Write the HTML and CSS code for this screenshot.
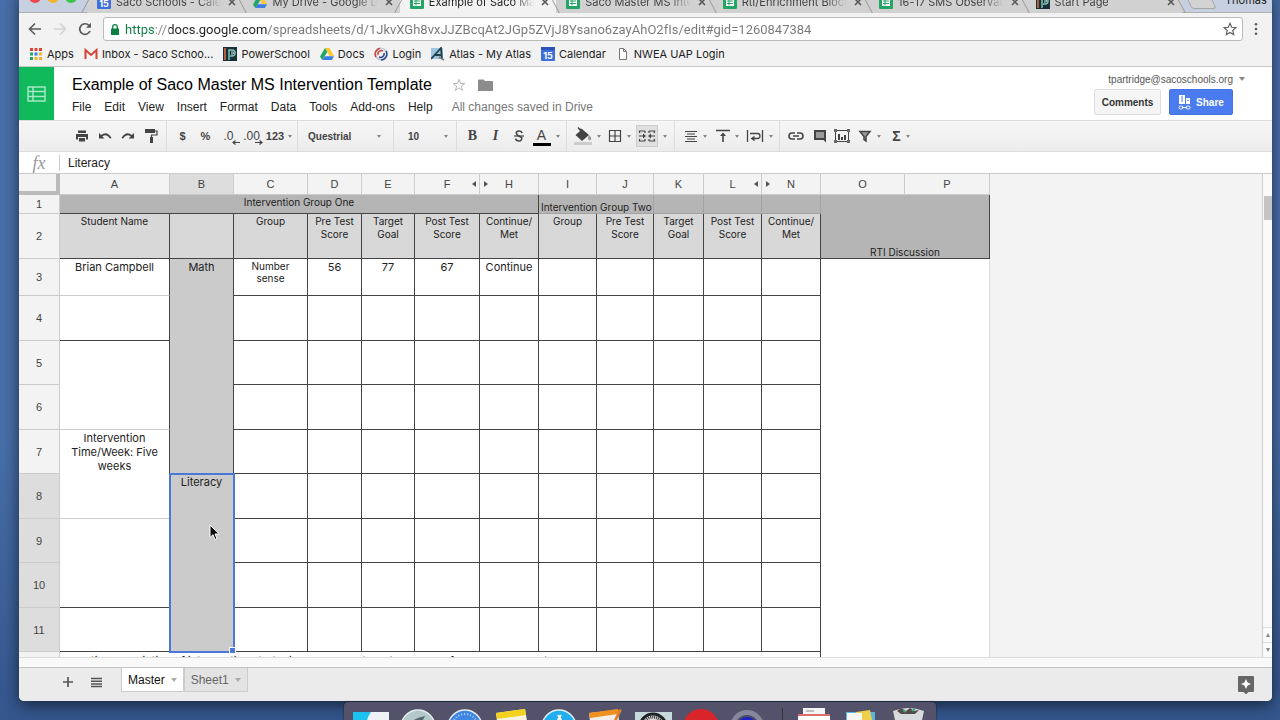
FILE: index.html
```html
<!DOCTYPE html>
<html lang="en">
<head>
    <meta charset="UTF-8">
    <meta name="viewport" content="width=device-width, initial-scale=1.0">
    <title>Example of Saco Master MS Intervention Template</title>
    <link rel="stylesheet" href="styles.css">
</head>
<body>
    <!-- shared icons -->
    <svg class="defs" width="0" height="0" aria-hidden="true">
        <symbol id="i-sheet" viewBox="0 0 14 14">
            <rect width="14" height="14" rx="1" fill="#23a566"/>
            <path d="M3 4h8v7H3z" fill="#fff"/>
            <path d="M4 6h6M4 8.500h6M6 4.500v6" stroke="#23a566" stroke-width="1"/>
        </symbol>
        <symbol id="i-cal" viewBox="0 0 14 14">
            <rect width="14" height="14" rx="1" fill="#3f6fdc"/>
            <rect width="14" height="3" fill="#2a53b5"/>
            <text x="7" y="11.500" font-size="9" font-weight="bold" text-anchor="middle" fill="#fff">15</text>
        </symbol>
        <symbol id="i-drive" viewBox="0 0 14 14">
            <path d="M5 1h4.500l4.500 8H9.500z" fill="#fcc934"/>
            <path d="M5 1L0 9.500 2.300 13l5-8z" fill="#22a565"/>
            <path d="M4.700 9.200H14L11.800 13H2.300z" fill="#3d7de4"/>
        </symbol>
        <symbol id="i-ps" viewBox="0 0 14 14">
            <rect width="14" height="14" fill="#17303a"/>
            <path d="M1 1h2v12H1z" fill="#b0603a"/>
            <path d="M6 13V3h3a3 3 0 0 1 0 6H7" fill="none" stroke="#7fc3b4" stroke-width="1.500"/>
            <path d="M8 5h1.500a1 1 0 0 1 0 2H8" fill="none" stroke="#d8e8e0"/>
        </symbol>
        <symbol id="i-close" viewBox="0 0 8 8">
            <path d="M1 1l6 6M7 1L1 7" stroke="#555" stroke-width="1.500"/>
        </symbol>
    </svg>

    <div class="window">
        <div class="tab-strip">
            <div class="lights"><i class="red"></i><i class="yellow"></i><i class="green"></i></div>
            <div class="tabs">
                <div class="tab"><svg><use href="#i-cal"/></svg><span>Saco Schools - Calendar</span><button aria-label="Close tab"><svg><use href="#i-close"/></svg></button></div>
                <div class="tab"><svg><use href="#i-drive"/></svg><span>My Drive - Google Drive</span><button aria-label="Close tab"><svg><use href="#i-close"/></svg></button></div>
                <div class="tab active"><svg><use href="#i-sheet"/></svg><span>Example of Saco Master</span><button aria-label="Close tab"><svg><use href="#i-close"/></svg></button></div>
                <div class="tab"><svg><use href="#i-sheet"/></svg><span>Saco Master MS Intervention</span><button aria-label="Close tab"><svg><use href="#i-close"/></svg></button></div>
                <div class="tab"><svg><use href="#i-sheet"/></svg><span>RtI/Enrichment Block</span><button aria-label="Close tab"><svg><use href="#i-close"/></svg></button></div>
                <div class="tab"><svg><use href="#i-sheet"/></svg><span>16-17 SMS Observations</span><button aria-label="Close tab"><svg><use href="#i-close"/></svg></button></div>
                <div class="tab"><svg><use href="#i-ps"/></svg><span>Start Page</span><button aria-label="Close tab"><svg><use href="#i-close"/></svg></button></div>
            </div>
            <button class="new-tab" aria-label="New tab"></button>
            <span class="profile">Thomas</span>
        </div>

        <div class="nav-bar">
            <button aria-label="Back"><svg width="14" height="14" viewBox="0 0 14 14"><path d="M13 7H2M7 1.500L1.500 7 7 12.500" fill="none" stroke="#5a5a5a" stroke-width="1.600"/></svg></button>
            <button aria-label="Forward"><svg width="14" height="14" viewBox="0 0 14 14"><path d="M1 7h11M7 1.500L12.500 7 7 12.500" fill="none" stroke="#d2d2d2" stroke-width="1.600"/></svg></button>
            <button aria-label="Reload"><svg width="14" height="14" viewBox="0 0 14 14"><path d="M12 9a5.300 5.300 0 1 1-1-5.500" fill="none" stroke="#5a5a5a" stroke-width="1.700"/><path d="M13 .8v5H8z" fill="#5a5a5a"/></svg></button>
            <div class="address">
                <svg width="8" height="11" viewBox="0 0 8 11"><path d="M0 4.500h8V11H0z" fill="#0b8043"/><path d="M1.700 5V3a2.300 2.300 0 0 1 4.600 0v2" fill="none" stroke="#0b8043" stroke-width="1.300"/></svg>
                <input class="url" type="text" aria-label="Address" value="https://docs.google.com/spreadsheets/d/1JkvXGh8vxJJZBcqAt2JGp5ZVjJ8Ysano6zayAhO2fIs/edit#gid=1260847384">
                <svg width="14" height="14" viewBox="0 0 14 14"><path d="M7 1.300l1.700 4 4.200.4-3.200 2.800 1 4.200L7 10.500l-3.700 2.200 1-4.200L1.100 5.700l4.200-.4z" fill="none" stroke="#5a5a5a" stroke-width="1.100"/></svg>
            </div>
            <button aria-label="Menu"><svg width="4" height="14" viewBox="0 0 4 14" fill="#5a5a5a"><circle cx="2" cy="2.200" r="1.300"/><circle cx="2" cy="7" r="1.300"/><circle cx="2" cy="11.800" r="1.300"/></svg></button>
        </div>

        <nav class="bookmarks">
            <a href="#"><svg viewBox="0 0 14 14"><g fill="#d9453b"><path d="M1 1h3v3H1zM5.500 1h3v3h-3z"/><path d="M10 1h3v3h-3z"/></g><path d="M1 5.500h3v3H1z" fill="#22a565"/><path d="M5.500 5.500h3v3h-3z" fill="#3d7de4"/><path d="M10 5.500h3v3h-3z" fill="#f0b428"/><path d="M1 10h3v3H1z" fill="#22a565"/><path d="M5.500 10h3v3h-3zM10 10h3v3h-3z" fill="#f0b428"/></svg>Apps</a>
            <a href="#"><svg viewBox="0 0 14 14"><path d="M1 2.500h12v9H1z" fill="#f3f3f3"/><path d="M1.500 12V3l5.500 5 5.500-5v9" fill="none" stroke="#d5443a" stroke-width="2"/></svg>Inbox - Saco Schoo...</a>
            <a href="#"><svg><use href="#i-ps"/></svg>PowerSchool</a>
            <a href="#"><svg><use href="#i-drive"/></svg>Docs</a>
            <a href="#"><svg viewBox="0 0 14 14" fill="none" stroke-width="1.600"><circle cx="7" cy="7" r="5.800" stroke="#c9ccd6"/><path d="M2 10A6 6 0 0 1 6 1.200M4 8a3.500 3.500 0 0 1 5-4" stroke="#c8453f"/><path d="M12 4A6 6 0 0 1 7 13M10 6a3.500 3.500 0 0 1-5 4" stroke="#2f4d8f"/></svg>Login</a>
            <a href="#"><svg viewBox="0 0 14 14"><path d="M0 1h12v11H0z" fill="#9cc4dc"/><path d="M0 12L10 1l1 11M4 8h7" fill="none" stroke="#24404f" stroke-width="1.800"/><path d="M8 10l5 3" stroke="#777" stroke-width="1.500"/></svg>Atlas - My Atlas</a>
            <a href="#"><svg><use href="#i-cal"/></svg>Calendar</a>
            <a href="#"><svg viewBox="0 0 14 14"><path d="M3.500 1.500h4l3 3v8h-7zM7.500 1.500v3h3" fill="#fff" stroke="#777"/></svg>NWEA UAP Login</a>
        </nav>

        <header class="doc-header">
            <a class="doc-logo" href="#" aria-label="Sheets home"><svg width="19" height="16" viewBox="0 0 19 16"><path d="M1 1h17v14H1zM1 5.500h17M1 10.500h17M6 1v14" fill="none" stroke="#a5e8c2" stroke-width="1.500"/></svg></a>
            <div class="doc-main">
                <div class="doc-title">
                    <h1>Example of Saco Master MS Intervention Template</h1>
                    <button aria-label="Star"><svg width="14" height="14" viewBox="0 0 14 14"><path d="M7 1.300l1.500 4.200h4.400L9.400 8.100l1.200 4.300L7 9.900l-3.600 2.500 1.200-4.300L1.100 5.500h4.400z" fill="none" stroke="#b5b5b5"/></svg></button>
                    <button aria-label="Move to folder"><svg width="15" height="13" viewBox="0 0 15 13"><path d="M0 1.500Q0 .5 1 .5h4.500L7 2h7q1 0 1 1v9H0z" fill="#8c8c8c"/></svg></button>
                </div>
                <div class="menus">
                    <button>File</button>
                    <button>Edit</button>
                    <button>View</button>
                    <button>Insert</button>
                    <button>Format</button>
                    <button>Data</button>
                    <button>Tools</button>
                    <button>Add-ons</button>
                    <button>Help</button>
                    <span class="saved">All changes saved in Drive</span>
                </div>
            </div>
            <div class="doc-side">
                <button class="account">tpartridge@sacoschools.org <i class="caret"></i></button>
                <div class="doc-buttons">
                    <button class="btn">Comments</button>
                    <button class="btn share"><svg width="13" height="15" viewBox="0 0 13 15"><path d="M1 0h6v3h5v6H1z" fill="#fff"/><path d="M3 2h2M3 4h2M3 6h2M9 5.500h1.500M7.500 3v6" stroke="#4a7cf0"/><rect x="1" y="11" width="4" height="3" rx="1.500" fill="none" stroke="#fff"/><rect x="8" y="11" width="4" height="3" rx="1.500" fill="none" stroke="#fff"/><path d="M4 12.500h5" stroke="#fff"/></svg>Share</button>
                </div>
            </div>
        </header>

        <div class="toolbar">
            <div class="group first">
                <button aria-label="Print"><svg viewBox="0 0 14 14"><path d="M3 1.500h8V4H3zM1 5h12v5.500h-2V8H3v2.500H1zM4 9h6v3.500H4z" fill="#444"/></svg></button>
                <button aria-label="Undo"><svg viewBox="0 0 14 14"><path d="M1 4v5.500h5.500L4.300 7.400Q8.500 4.500 12 9.600l1.500-.7Q9 1.500 3.100 6z" fill="#444"/></svg></button>
                <button aria-label="Redo"><svg viewBox="0 0 14 14"><path d="M13 4v5.500H7.500l2.200-2.100Q5.500 4.500 2 9.600L.5 8.900Q5 1.500 10.900 6z" fill="#444"/></svg></button>
                <button aria-label="Paint format"><svg viewBox="0 0 14 14"><path d="M1 0h10v4H1z" fill="#444"/><path d="M11 2h2v4H7.500v2" fill="none" stroke="#444" stroke-width="1.200"/><path d="M6 8h3v6H6z" fill="#444"/></svg></button>
            </div>
            <div class="group numbers">
                <button>$</button>
                <button>%</button>
                <button class="decimal">.0<svg viewBox="0 0 8 5"><path d="M8 2.500H1M3.500 .5L1 2.500l2.500 2" fill="none" stroke="#444" stroke-width="1.200"/></svg></button>
                <button class="decimal">.00<svg viewBox="0 0 8 5"><path d="M0 2.500h7M4.500 .5L7 2.500l-2.500 2" fill="none" stroke="#444" stroke-width="1.200"/></svg></button>
                <button class="more">123 <i class="caret"></i></button>
            </div>
            <div class="group pick">
                <select class="font" aria-label="Font"><option>Questrial</option></select><i class="caret"></i>
            </div>
            <div class="group pick size">
                <select aria-label="Font size"><option>10</option></select><i class="caret"></i>
            </div>
            <div class="group">
                <button class="serif">B</button>
                <button class="serif italic">I</button>
                <button class="strike" aria-label="Strikethrough"><svg viewBox="0 0 14 14"><path d="M10 4Q9.500 2 7 2 4.300 2 4.300 4t5.400 4.500Q10 12 7 12t-3.300-2.300" fill="none" stroke="#444" stroke-width="1.600"/><path d="M2 7h10" stroke="#444" stroke-width="1.200"/></svg></button>
                <button class="drop"><span class="text-color">A</span><i class="caret"></i></button>
            </div>
            <div class="group cells">
                <button class="drop" aria-label="Fill color"><svg class="fill" viewBox="0 0 18 18"><path d="M4.500 0l1.500 1.500L8 2l7 6-7 6-6.500-6L6 4 3.500 1z" fill="#444"/><path d="M15 8q3.500 3.500 1.500 5t-2.500-2z" fill="#999"/><path d="M0 15h18v3H0z" fill="#ccc"/></svg><i class="caret"></i></button>
                <button class="drop" aria-label="Borders"><svg viewBox="0 0 14 14"><path d="M1.500 1.500h11v11h-11zM7 1.500v11M1.500 7h11" fill="none" stroke="#444" stroke-width="1.200"/></svg><i class="caret"></i></button>
                <button class="drop" aria-label="Merge cells"><span class="pressed"><svg class="wide" viewBox="0 0 18 14"><path d="M7 2H1.500v2M1.500 10v2H7M11 2h5.500v2M16.500 10v2H11M7 2v2M11 2v2M7 12v-2M11 12v-2M1 7h5M17 7h-5" fill="none" stroke="#444" stroke-width="1.200"/><path d="M5 4.500L8 7 5 9.500zM13 4.500L10 7l3 2.500z" fill="#444"/></svg></span><i class="caret"></i></button>
            </div>
            <div class="group">
                <button class="drop" aria-label="Horizontal align"><svg viewBox="0 0 14 14"><path d="M1 2.500h12M3 5h8M1 7.500h12M3 10h8M1 12.500h12" stroke="#444" stroke-width="1.100"/></svg><i class="caret"></i></button>
                <button class="drop" aria-label="Vertical align"><svg viewBox="0 0 14 14"><path d="M0 1.500h14M7 13V5" stroke="#444" stroke-width="1.600"/><path d="M4 7l3-3.500L10 7z" fill="#444"/></svg><i class="caret"></i></button>
                <button class="drop" aria-label="Text wrapping"><svg class="wide" viewBox="0 0 18 14"><path d="M1.500 1v12M16.500 1v12M4 4.500h7.500a2.500 2.500 0 0 1 0 5H7" fill="none" stroke="#444" stroke-width="1.300"/><path d="M4.500 9.500L8.500 6.800v5.400z" fill="#444"/></svg><i class="caret"></i></button>
            </div>
            <div class="group last">
                <button aria-label="Insert link"><svg class="wide" viewBox="0 0 18 14"><path d="M8 4H5a3 3 0 0 0 0 6h3M10 4h3a3 3 0 0 1 0 6h-3M6 7h6" fill="none" stroke="#444" stroke-width="1.600"/></svg></button>
                <button aria-label="Insert comment"><svg viewBox="0 0 14 14"><path d="M0 1h14v12.500L11.500 11H2V1z" fill="#444"/><path d="M4 4h8M4 6h8M4 8h8" stroke="#eee"/></svg></button>
                <button aria-label="Insert chart"><svg class="wide" viewBox="0 0 18 14"><path d="M2.500 1.500h13v11h-13z" fill="none" stroke="#444"/><path d="M5 5h2v6H5zM8 8h2v3H8zM11 6h2v5h-2z" fill="#444"/><path d="M1 0h3v3H1zM14 0h3v3h-3zM1 11h3v3H1zM14 11h3v3h-3z" fill="#666"/></svg></button>
                <button class="drop" aria-label="Filter"><svg viewBox="0 0 14 14"><path d="M2 2.500h10L8 7.500V12L6 10.500v-3z" fill="#999" stroke="#444" stroke-width="1.500"/></svg><i class="caret"></i></button>
                <button class="drop sum">Σ<i class="caret"></i></button>
            </div>
        </div>

        <div class="formula">
            <label for="fx">fx</label>
            <input id="fx" type="text" value="Literacy">
        </div>

        <div class="sheet">
            <div class="grid">
                <table>
                    <colgroup>
                        <col class="w-head"><col class="w-a"><col class="w-b"><col class="w-c"><col class="w-d"><col class="w-e"><col class="w-f"><col class="w-h"><col class="w-i"><col class="w-j"><col class="w-k"><col class="w-l"><col class="w-n"><col class="w-o"><col class="w-p">
                    </colgroup>
                    <thead>
                        <tr>
                            <th class="corner"></th>
                            <th>A</th>
                            <th class="selected">B</th>
                            <th>C</th>
                            <th>D</th>
                            <th>E</th>
                            <th class="hide-left">F</th>
                            <th class="hide-right">H</th>
                            <th>I</th>
                            <th>J</th>
                            <th>K</th>
                            <th class="hide-left">L</th>
                            <th class="hide-right">N</th>
                            <th>O</th>
                            <th>P</th>
                        </tr>
                    </thead>
                    <tbody>
                        <tr class="group-row">
                            <th>1</th>
                            <td colspan="7" class="line">Intervention Group One</td>
                            <td colspan="2" class="low">Intervention Group Two</td>
                            <td></td>
                            <td></td>
                            <td></td>
                            <td colspan="2" rowspan="2" class="low center line">RTI Discussion</td>
                        </tr>
                        <tr class="label-row">
                            <th>2</th>
                            <td>Student Name</td>
                            <td></td>
                            <td>Group</td>
                            <td>Pre Test Score</td>
                            <td>Target Goal</td>
                            <td>Post Test Score</td>
                            <td>Continue/ Met</td>
                            <td>Group</td>
                            <td>Pre Test Score</td>
                            <td>Target Goal</td>
                            <td>Post Test Score</td>
                            <td>Continue/ Met</td>
                        </tr>
                        <tr class="short">
                            <th>3</th>
                            <td class="light">Brian Campbell</td>
                            <td rowspan="5" class="subject">Math</td>
                            <td class="small">Number sense</td>
                            <td>56</td>
                            <td>77</td>
                            <td>67</td>
                            <td>Continue</td>
                            <td></td><td></td><td></td><td></td><td></td>
                            <td colspan="2" rowspan="10" class="blank"></td>
                        </tr>
                        <tr>
                            <th>4</th>
                            <td></td>
                            <td></td><td></td><td></td><td></td><td></td><td></td><td></td><td></td><td></td><td></td>
                        </tr>
                        <tr>
                            <th>5</th>
                            <td rowspan="2" class="light"></td>
                            <td></td><td></td><td></td><td></td><td></td><td></td><td></td><td></td><td></td><td></td>
                        </tr>
                        <tr>
                            <th>6</th>
                            <td></td><td></td><td></td><td></td><td></td><td></td><td></td><td></td><td></td><td></td>
                        </tr>
                        <tr>
                            <th>7</th>
                            <td rowspan="2" class="light">Intervention Time/Week: Five weeks</td>
                            <td></td><td></td><td></td><td></td><td></td><td></td><td></td><td></td><td></td><td></td>
                        </tr>
                        <tr>
                            <th class="selected">8</th>
                            <td rowspan="4" class="subject current">
                                Literacy
                                <svg class="pointer" width="12" height="17" viewBox="0 0 12 17"><path d="M1 1v12.500l3-2.800 2 4.800 2-.9-2-4.600h4.300z" fill="#111" stroke="#fff"/></svg>
                            </td>
                            <td></td><td></td><td></td><td></td><td></td><td></td><td></td><td></td><td></td><td></td>
                        </tr>
                        <tr>
                            <th class="selected">9</th>
                            <td rowspan="2"></td>
                            <td></td><td></td><td></td><td></td><td></td><td></td><td></td><td></td><td></td><td></td>
                        </tr>
                        <tr>
                            <th class="selected">10</th>
                            <td></td><td></td><td></td><td></td><td></td><td></td><td></td><td></td><td></td><td></td>
                        </tr>
                        <tr>
                            <th class="selected">11</th>
                            <td></td>
                            <td></td><td></td><td></td><td></td><td></td><td></td><td></td><td></td><td></td><td></td>
                        </tr>
                        <tr class="notes">
                            <th></th>
                            <td colspan="12">Narrative description of intervention strategies, progress, target goals and feedback on growth:</td>
                        </tr>
                    </tbody>
                </table>
            </div>
            <div class="scroll-y">
                <span class="thumb"></span>
                <button aria-label="Scroll up"><i class="caret up"></i></button>
                <button aria-label="Scroll down"><i class="caret"></i></button>
            </div>
            <div class="scroll-x"></div>
        </div>

        <footer class="sheet-tabs">
            <button class="tool" aria-label="Add sheet"><svg width="10" height="10" viewBox="0 0 10 10"><path d="M5 0v10M0 5h10" stroke="#555" stroke-width="1.700"/></svg></button>
            <button class="tool" aria-label="All sheets"><svg width="11" height="11" viewBox="0 0 11 11"><path d="M0 1.500h11M0 4.200h11M0 6.900h11M0 9.600h11" stroke="#555" stroke-width="1.500"/></svg></button>
            <button class="sheet-tab on">Master <i class="caret"></i></button>
            <button class="sheet-tab">Sheet1 <i class="caret"></i></button>
            <button class="explore" aria-label="Explore"><svg width="16" height="18" viewBox="0 0 16 18"><path d="M1 0h14q1 0 1 1v14q0 1-1 1h-4.500L8 18.500 5.500 16H1q-1 0-1-1V1q0-1 1-1z" fill="#666"/><path d="M8 3l1.600 3.400L13 8 9.600 9.600 8 13 6.400 9.600 3 8l3.400-1.600z" fill="#fff"/></svg></button>
        </footer>
    </div>

    <!-- dock, only the top of every icon is on screen -->
    <div class="dock">
        <svg viewBox="0 0 47 18"><path d="M5 10h36v8H5z" fill="#eef1f6"/><path d="M5 10h18q-3 4-4 8H5z" fill="#1bc3ee"/></svg>
        <svg viewBox="0 0 47 18"><circle cx="23" cy="25" r="17" fill="#b4c9cb" stroke="#e4eced" stroke-width="1.500"/><path d="M16 20q6-5 14-6-2 5-6 8z" fill="#586a70"/></svg>
        <svg viewBox="0 0 47 18"><circle cx="23" cy="25" r="17" fill="#3f86e4" stroke="#e8eef5" stroke-width="1.500"/><circle cx="23" cy="25" r="13" fill="none" stroke="#bcd8fb" stroke-width="2" stroke-dasharray="1 2"/></svg>
        <svg viewBox="0 0 47 18"><path d="M7 11l29-4 2 12H8z" fill="#f6f3e0"/><path d="M7 11l29-4 1 6-29 4z" fill="#f2d21c"/></svg>
        <svg viewBox="0 0 47 18"><circle cx="23" cy="25" r="17" fill="#20aef0" stroke="#e6f1f7" stroke-width="1.500"/><path d="M22 13l6 10M25 13l-6 10" stroke="#fff" stroke-width="2"/></svg>
        <svg viewBox="0 0 47 18"><path d="M6 11l29-3 1 11H7z" fill="#f3efe8"/><path d="M6 11l29-4v5L7 16z" fill="#f0901e"/><path d="M36 7l3 1-5 10h-3z" fill="#d9822b"/></svg>
        <svg viewBox="0 0 47 18"><path d="M5 10h37v8H5z" fill="#c6dadd"/><circle cx="23" cy="25" r="13" fill="#d8d8d8" stroke="#202326" stroke-width="3"/><circle cx="23" cy="25" r="10" fill="none" stroke="#333" stroke-width="3" stroke-dasharray="1 1"/></svg>
        <svg viewBox="0 0 47 18"><circle cx="24" cy="25" r="18" fill="#d9242b"/></svg>
        <svg viewBox="0 0 47 18"><circle cx="23" cy="25" r="17" fill="#85889c"/><circle cx="23" cy="25" r="11" fill="#1d22c8" stroke="#4a4c62" stroke-width="2"/></svg>
        <i class="divider"></i>
        <svg viewBox="0 0 47 18"><path d="M12 6h22v12H12z" fill="#f4f4f4"/><path d="M7 12h32v6H7z" fill="#fff"/><path d="M7 13h32" stroke="#cf3d3a" stroke-width="1.500"/><path d="M15 9h8" stroke="#888"/></svg>
        <svg viewBox="0 0 47 18"><path d="M8 10h29v8H8z" fill="#59b5dc"/><path d="M18 10l14-2 2 10H18z" fill="#f0d04a"/><path d="M9 11h15v7H9z" fill="#f6f6f2"/></svg>
        <svg viewBox="0 0 47 18"><path d="M8 9q15-6 31 0l-2 9H10z" fill="#d9dadb"/><path d="M12 9l4-3 5 3 4-3 4 3 5-1-4 4H16z" fill="#554a4c"/><path d="M18 8l3 2M27 9l3-2" stroke="#3da578" stroke-width="2"/></svg>
    </div>
</body>
</html>
```

FILE: styles.css
```css
* {
    margin: 0;
    padding: 0;
    box-sizing: border-box;
}

body {
    height: 100vh;
    display: flex;
    flex-direction: column;
    overflow: hidden;
    font-family: "Liberation Sans", Arial, sans-serif;
    font-size: 12px;
    color: #222;
    background: linear-gradient(#486fa9 60%, #34568d);
}

button,
input,
select {
    font: inherit;
    color: inherit;
    border: none;
    background: none;
    outline: none;
}

button {
    display: flex;
    align-items: center;
    justify-content: center;
    white-space: nowrap;
    cursor: pointer;
}

a {
    color: inherit;
    text-decoration: none;
}

svg {
    display: block;
    flex: none;
}

.defs {
    position: absolute;
}

.caret {
    flex: none;
    border: 3px solid transparent;
    border-top: 4px solid #888;
    border-bottom: none;
}

.caret.up {
    border-top: none;
    border-bottom: 4px solid #888;
}

/* browser window */
.window {
    flex: 1;
    min-height: 0;
    margin: -9px 8px 1px 19px;
    display: flex;
    flex-direction: column;
    background: #fff;
    border-radius: 5px;
    box-shadow: 0 4px 16px rgba(0, 0, 0, 0.6);
    overflow: hidden;
}

.tab-strip {
    display: flex;
    align-items: flex-start;
    height: 22px;
    flex: none;
    font-family: Inter, sans-serif;
    font-size: 11px;
    background: #c6d0e0;
    border-bottom: 1px solid #b0b0b0;
}

.lights {
    display: flex;
    gap: 6px;
    padding-left: 10px;
    width: 68px;
}

.lights i {
    width: 12px;
    height: 12px;
    border-radius: 50%;
}

.red {
    background: #f0464b;
}

.yellow {
    background: #f5b52e;
}

.green {
    background: #35c648;
}

.tabs {
    display: flex;
    flex: 0 1 1095px;
    min-width: 0;
    height: 22px;
    background: #d1d1d1;
}

.tab {
    position: relative;
    display: flex;
    flex: 1;
    min-width: 0;
    align-items: center;
    gap: 5px;
    padding: 0 5px 0 10px;
    color: #444;
}

.tab svg {
    width: 14px;
    height: 14px;
}

.tab span {
    flex: 1;
    overflow: hidden;
    white-space: nowrap;
    mask-image: linear-gradient(90deg, #000 80%, transparent);
}

.tab button {
    width: 12px;
}

.tab button svg {
    width: 8px;
    height: 8px;
}

.tab::after {
    content: "";
    position: absolute;
    top: 0;
    right: 2px;
    width: 8px;
    height: 22px;
    border-right: 1px solid #999;
    transform: skewX(28deg);
}

.tab:first-child::before,
.active::before {
    content: "";
    position: absolute;
    top: 0;
    left: 0;
    width: 8px;
    height: 22px;
    border-left: 1px solid #999;
    transform: skewX(-28deg);
}

.tab:has(+ .active)::after {
    display: none;
}

.active {
    color: #222;
    background: #f2f2f2;
}

.new-tab {
    width: 25px;
    height: 16px;
    margin: 2px 12px 0 6px;
    border: 1px solid #a5a5a5;
    border-radius: 3px;
    background: #d3d3d3;
    transform: skewX(25deg);
}

.profile {
    line-height: 18px;
}

.nav-bar {
    display: flex;
    align-items: center;
    flex: none;
    gap: 11px;
    height: 32px;
    padding: 0 14px 0 9px;
    background: #f2f2f2;
}

.address {
    display: flex;
    align-items: center;
    flex: 1;
    height: 24px;
    gap: 6px;
    padding: 0 5px 0 7px;
    border: 1px solid #bbb;
    border-radius: 3px;
    background: #fff;
}

.url {
    flex: 1;
    min-width: 0;
    font-family: Roboto, sans-serif;
    font-size: 13px;
    color: transparent;
    background: linear-gradient(90deg, #0b8043 30px, #888 30px, #888 44px, #222 44px, #222 142px, #777 142px);
    background-clip: text;
}

.bookmarks {
    display: flex;
    align-items: center;
    flex: none;
    gap: 10px;
    height: 22px;
    padding: 0 10px 4px;
    font-family: Inter, sans-serif;
    font-size: 11px;
    white-space: nowrap;
    background: #f2f2f2;
    border-bottom: 1px solid #c8c8c8;
}

.bookmarks a {
    display: flex;
    align-items: center;
    gap: 4px;
}

.bookmarks svg {
    width: 14px;
    height: 14px;
}

/* document header */
.doc-header {
    display: flex;
    flex: none;
    height: 53px;
}

.doc-logo {
    display: flex;
    align-items: center;
    justify-content: center;
    width: 35px;
    background: #0fb95c;
}

.doc-main {
    flex: 1;
    padding: 7px 0 0 18px;
}

.doc-title {
    display: flex;
    align-items: center;
    gap: 12px;
    height: 22px;
}

.doc-title h1 {
    margin-right: 8px;
    font-size: 16px;
    font-weight: normal;
    color: #000;
}

.menus {
    display: flex;
    align-items: center;
    gap: 13px;
    height: 22px;
}

.saved {
    margin-left: 6px;
    color: #777;
}

.doc-side {
    display: flex;
    flex-direction: column;
    align-items: flex-end;
    gap: 2px;
    padding: 4px 27px 0 0;
}

.account {
    gap: 6px;
    height: 16px;
    font-size: 10px;
    color: #555;
}

.doc-buttons {
    display: flex;
    gap: 8px;
    padding-right: 12px;
}

.btn {
    gap: 5px;
    height: 26px;
    width: 67px;
    font-size: 10px;
    font-weight: bold;
    color: #333;
    background: #f5f5f5;
    border: 1px solid #ddd;
    border-radius: 2px;
}

.share {
    width: 64px;
    color: #fff;
    background: #4a7cf0;
    border-color: #4472e0;
}

/* toolbar */
.toolbar {
    display: flex;
    flex: none;
    height: 32px;
    color: #444;
    background: linear-gradient(#f6f6f6, #ececec);
    border: solid #ddd;
    border-width: 1px 0;
}

.group {
    display: flex;
    align-items: center;
    padding: 0 4px;
    border-right: 1px solid #ddd;
}

.group.first {
    padding-left: 51px;
}

.group.numbers {
    padding-right: 2px;
}

.group.cells {
    padding-right: 7px;
}

.group.last {
    border-right: none;
}

.group button {
    width: 23px;
    height: 22px;
    font-size: 11px;
    font-weight: bold;
}

.group svg {
    width: 14px;
    height: 14px;
}

.group svg.wide {
    width: 18px;
}

.group svg.fill {
    width: 18px;
    height: 18px;
}

.group .caret {
    border-width: 3px 2px 0;
}

.group .drop {
    width: 32px;
    gap: 5px;
}

.group .sum {
    font-size: 14px;
}

.group .more {
    width: 32px;
    gap: 4px;
}

.numbers .decimal {
    position: relative;
    font-size: 12px;
    font-weight: normal;
}

.numbers .decimal svg {
    position: absolute;
    right: 0;
    bottom: 2px;
    width: 8px;
    height: 5px;
}

.pick {
    width: 96px;
    padding: 0 12px 0 10px;
}

.pick.size {
    width: 63px;
    padding: 0 8px 0 14px;
}

.pick select {
    flex: 1;
    min-width: 0;
    appearance: none;
    font-size: 10px;
    font-weight: bold;
}

.group .serif {
    font-family: "Liberation Serif", serif;
    font-size: 14px;
}

.group .italic {
    font-style: italic;
}

.text-color {
    width: 18px;
    line-height: 16px;
    font-size: 14px;
    font-weight: normal;
    border-bottom: 3px solid #000;
}

.pressed {
    display: flex;
    align-items: center;
    height: 22px;
    padding: 0 1px;
    background: #e0e0e0;
    border: 1px solid #ccc;
}

/* formula bar */
.formula {
    display: flex;
    align-items: center;
    flex: none;
    height: 21px;
}

.formula label {
    width: 41px;
    line-height: 16px;
    font-family: "Liberation Serif", serif;
    font-size: 18px;
    font-style: italic;
    text-align: center;
    color: #999;
    border-right: 1px solid #ccc;
}

.formula input {
    flex: 1;
    padding-left: 8px;
}

/* spreadsheet */
.sheet {
    display: grid;
    grid-template: minmax(0, 1fr) 10px / minmax(0, 1fr) 10px;
    flex: 1;
    min-height: 0;
    border-top: 1px solid #ccc;
}

.grid {
    overflow: hidden;
    background: #f3f3f3;
}

table {
    width: 971px;
    table-layout: fixed;
    border-collapse: separate;
    border-spacing: 0;
    font-family: Inter, sans-serif;
    font-size: 11px;
    line-height: 14px;
    background: #fff;
}

.w-head { width: 41px; }
.w-a { width: 110px; }
.w-b { width: 64px; }
.w-c { width: 74px; }
.w-d { width: 54px; }
.w-e { width: 53px; }
.w-f { width: 65px; }
.w-h { width: 59px; }
.w-i { width: 58px; }
.w-j { width: 57px; }
.w-k { width: 50px; }
.w-l { width: 58px; }
.w-n { width: 59px; }
.w-o { width: 84px; }
.w-p { width: 85px; }

tr {
    height: 44px;
}

tr:nth-child(even) {
    height: 45px;
}

thead tr {
    height: 21px;
}

.group-row {
    height: 19px;
}

tr.short {
    height: 37px;
}

tr.notes {
    height: 20px;
}

th {
    position: relative;
    font-family: "Liberation Sans", Arial, sans-serif;
    font-size: 11px;
    font-weight: normal;
    color: #444;
    background: #f3f3f3;
    border: solid #ccc;
    border-width: 0 1px 1px 0;
}

th.selected {
    background: #ddd;
}

th.corner {
    border: solid #bbb;
    border-width: 0 4px 4px 0;
}

.hide-left::after,
.hide-right::after {
    content: "";
    position: absolute;
    top: 7px;
    right: 3px;
    border: 3px solid transparent;
    border-right: 4px solid #555;
    border-left: none;
}

.hide-right::after {
    right: auto;
    left: 4px;
    border: 3px solid transparent;
    border-left: 4px solid #555;
    border-right: none;
}

td {
    padding: 1px 2px;
    text-align: center;
    vertical-align: top;
    border: solid #444;
    border-width: 0 1px 1px 0;
}

.group-row td {
    padding: 0 2px;
    font-size: 10px;
    white-space: nowrap;
    background: #b5b5b5;
    border-color: #a2a2a2;
}

.group-row td.line {
    border-color: #444;
}

.group-row td.low {
    vertical-align: bottom;
    text-align: left;
    line-height: 12px;
}

.group-row td.center {
    text-align: center;
}

.label-row td {
    font-size: 10px;
    line-height: 13px;
    background: #d8d8d8;
}

td.light {
    border-bottom-color: #ccc;
}

td.small {
    padding: 1px 8px;
    font-size: 10px;
    line-height: 12px;
}

td.blank {
    border-color: #ddd;
}

td.subject {
    background: #cbcbcb;
}

td.current {
    position: relative;
    border-color: #4b78d8;
    outline: 2px solid #4b78d8;
    outline-offset: -1px;
}

td.current::after {
    content: "";
    position: absolute;
    right: -3px;
    bottom: -3px;
    width: 5px;
    height: 5px;
    background: #4b78d8;
    border: 1px solid #fff;
    box-sizing: content-box;
}

.pointer {
    position: absolute;
    top: 50px;
    left: 39px;
}

.notes td {
    padding-top: 2px;
    text-align: left;
    border-bottom: none;
    white-space: nowrap;
}

.scroll-y {
    display: flex;
    flex-direction: column;
    background: #fafafa;
    border-left: 1px solid #ccc;
}

.thumb {
    height: 24px;
    margin: 22px 0 auto 1px;
    background: #c4c4c4;
}

.scroll-y button {
    height: 15px;
    border-top: 1px solid #ddd;
}

.scroll-y .caret {
    border-left-width: 2px;
    border-right-width: 2px;
}

.scroll-x {
    grid-column: 1 / -1;
    background: #f9f9f9;
    border-top: 1px solid #ddd;
}

/* sheet tabs */
.sheet-tabs {
    display: flex;
    flex: none;
    height: 34px;
    padding: 0 18px 0 35px;
    background: #ebebeb;
    border-top: 1px solid #c4c4c4;
}

.sheet-tabs .tool {
    width: 28px;
    height: 28px;
}

.sheet-tab {
    gap: 6px;
    height: 24px;
    padding: 0 6px;
    color: #666;
    background: #e3e3e3;
    border: 1px solid #ccc;
    border-top: none;
}

.sheet-tab .caret {
    border-top-color: #aaa;
}

.sheet-tab.on {
    margin-left: 11px;
    color: #111;
    background: #fff;
}

.explore {
    margin-left: auto;
}

/* dock */
.dock {
    display: flex;
    flex: none;
    align-self: center;
    height: 18px;
    padding: 0 4px;
    background: #54526a;
    border-radius: 4px 4px 0 0;
    box-shadow: 0 0 2px #111;
}

.dock svg {
    width: 47px;
    height: 18px;
}

.divider {
    width: 1px;
    margin: 6px 8px 0 11px;
    background: #333;
}
```
